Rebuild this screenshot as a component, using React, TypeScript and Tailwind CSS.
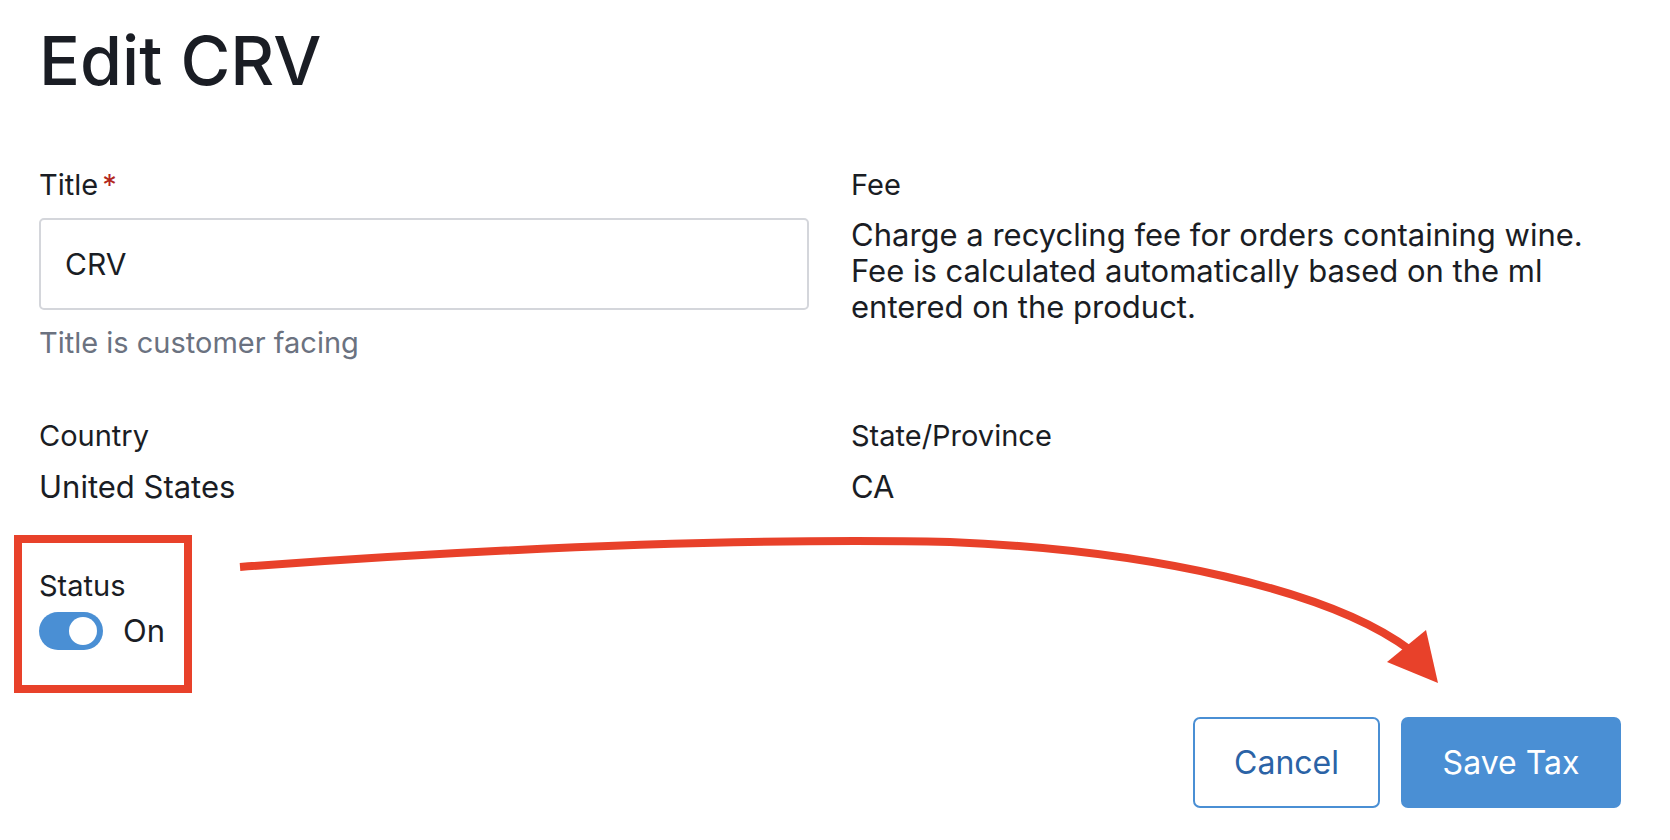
export default function App() {
  return (
    <div className="relative w-[1670px] h-[840px] bg-white text-[#1a1d24] overflow-hidden" style={{ fontFamily: 'Inter, "Noto Sans", sans-serif' }}>
      <div className="w-[1582px] ml-[39px] pt-[26px]">
        <h1 className="text-[68px] leading-none font-medium">Edit CRV</h1>

        <div className="grid grid-cols-2 gap-x-[42px] mt-[73px]">
          <div>
            <div className="text-[29px] leading-[36px]">
              Title<span className="text-[#b3261e] ml-1">*</span>
            </div>
            <div className="mt-[15px] h-[92px] border-2 border-[#d4d6db] rounded-[5px] flex items-center px-[24px] text-[30px]">
              CRV
            </div>
            <div className="mt-[15px] text-[29px] leading-[36px] text-[#6b7280]">Title is customer facing</div>
          </div>
          <div>
            <div className="text-[29px] leading-[36px]">Fee</div>
            <p className="mt-[14px] text-[31px] leading-[36px] max-w-[740px]">
              Charge a recycling fee for orders containing wine. Fee is calculated automatically based on the ml entered on the product.
            </p>
          </div>

          <div className="mt-[57px]">
            <div className="text-[29px] leading-[36px]">Country</div>
            <div className="mt-[15px] text-[31px] leading-[36px]">United States</div>
          </div>
          <div className="mt-[57px]">
            <div className="text-[29px] leading-[36px]">State/Province</div>
            <div className="mt-[15px] text-[31px] leading-[36px]">CA</div>
          </div>
        </div>

        <div className="mt-[63px]">
          <div className="text-[29px] leading-[36px]">Status</div>
          <div className="mt-[8px] flex items-center gap-[20px]">
            <div className="w-[64px] h-[38px] rounded-full bg-[#4a8fd4] flex items-center justify-end pr-[6px]">
              <div className="w-[28px] h-[28px] rounded-full bg-white" />
            </div>
            <span className="text-[31px] leading-[36px]">On</span>
          </div>
        </div>

        <div className="flex justify-end gap-[21px] mt-[67px]">
          <button className="w-[187px] h-[91px] border-2 border-[#4a8fd4] rounded-[7px] text-[32px] text-[#2b63a6] bg-white">
            Cancel
          </button>
          <button className="w-[220px] h-[91px] rounded-[7px] text-[32px] text-white bg-[#4a8fd4]">
            Save Tax
          </button>
        </div>
      </div>

      <div className="absolute left-[14px] top-[535px] w-[178px] h-[158px] border-[8px] border-[#e8412a]" />

      <svg className="absolute left-0 top-0 pointer-events-none" width="1670" height="840" viewBox="0 0 1670 840">
        <path d="M240 567 C 500 548, 750 538, 950 542 C 1150 550, 1330 590, 1410 650" fill="none" stroke="#e8412a" strokeWidth="8" />
        <polygon points="1387,662 1426,630 1438,683" fill="#e8412a" />
      </svg>
    </div>
  );
}
